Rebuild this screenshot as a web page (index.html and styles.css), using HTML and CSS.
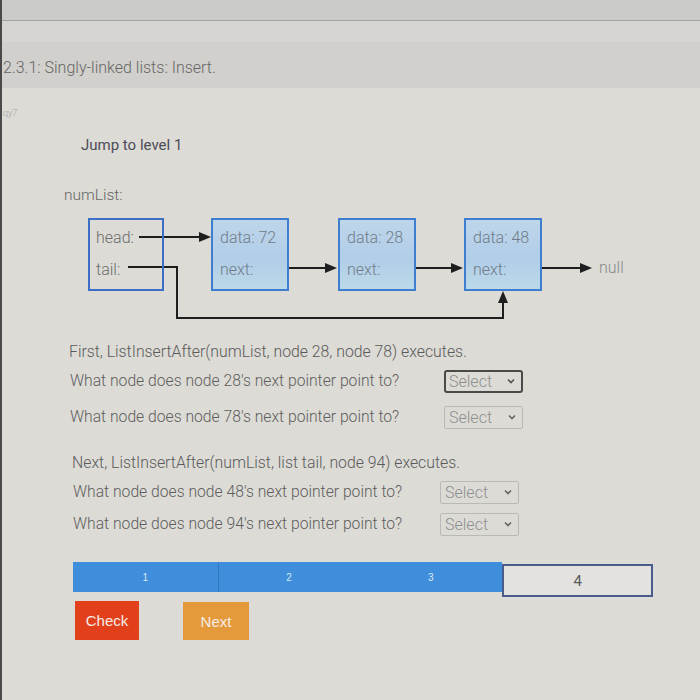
FILE: index.html
```html
<!DOCTYPE html>
<html>
<head>
<meta charset="utf-8">
<link rel="stylesheet" href="styles.css">
</head>
<body>
<div class="page">
  <div class="topbar"></div>
  <div class="band"></div>
  <div class="titlebar"><span class="title">2.3.1: Singly-linked lists: Insert.</span></div>
  <div class="content">
    <div class="code">qy7</div>
    <div class="jump">Jump to level 1</div>
    <div class="numlist">numList:</div>
    <div class="diagram">
      <svg class="arrows" width="700" height="115" viewBox="0 0 700 115">
        <g stroke="#1e1e1e" stroke-width="2" fill="none">
          <line x1="139" y1="25" x2="203" y2="25"/>
          <polyline points="128,55 177,55 177,106 503,106 503,88"/>
          <line x1="260" y1="56" x2="329" y2="56"/>
          <line x1="386" y1="56" x2="455" y2="56"/>
          <line x1="513" y1="56" x2="584" y2="56"/>
        </g>
        <g fill="#1e1e1e">
          <polygon points="199,20 211,25 199,30"/>
          <polygon points="325,51 337,56 325,61"/>
          <polygon points="451,51 463,56 451,61"/>
          <polygon points="580,51 592,56 580,61"/>
          <polygon points="498,91 503,79 508,91"/>
        </g>
      </svg>
      <div class="box listbox"><span>head:</span><span>tail:</span></div>
      <div class="box node n1"><span>data: 72</span><span>next:</span></div>
      <div class="box node n2"><span>data: 28</span><span>next:</span></div>
      <div class="box node n3"><span>data: 48</span><span>next:</span></div>
      <div class="null">null</div>
    </div>

    <div class="group g1">
      <div class="intro">First, ListInsertAfter(numList, node 28, node 78) executes.</div>
      <div class="row">
        <div class="label">What node does node 28's next pointer point to?</div>
        <div class="select focused"><span>Select</span><svg width="10" height="8" viewBox="0 0 10 8"><path d="M2 2.5 L5 5.5 L8 2.5" stroke="#555" stroke-width="1.6" fill="none"/></svg></div>
      </div>
      <div class="row">
        <div class="label">What node does node 78's next pointer point to?</div>
        <div class="select"><span>Select</span><svg width="10" height="8" viewBox="0 0 10 8"><path d="M2 2.5 L5 5.5 L8 2.5" stroke="#666" stroke-width="1.6" fill="none"/></svg></div>
      </div>
    </div>

    <div class="group g2">
      <div class="intro">Next, ListInsertAfter(numList, list tail, node 94) executes.</div>
      <div class="row">
        <div class="label">What node does node 48's next pointer point to?</div>
        <div class="select"><span>Select</span><svg width="10" height="8" viewBox="0 0 10 8"><path d="M2 2.5 L5 5.5 L8 2.5" stroke="#666" stroke-width="1.6" fill="none"/></svg></div>
      </div>
      <div class="row">
        <div class="label">What node does node 94's next pointer point to?</div>
        <div class="select"><span>Select</span><svg width="10" height="8" viewBox="0 0 10 8"><path d="M2 2.5 L5 5.5 L8 2.5" stroke="#666" stroke-width="1.6" fill="none"/></svg></div>
      </div>
    </div>

    <div class="progress">
      <div class="seg done s1">1</div>
      <div class="seg done s2">2</div>
      <div class="seg done s3">3</div>
      <div class="seg current">4</div>
    </div>

    <div class="buttons">
      <div class="btn check">Check</div>
      <div class="btn next">Next</div>
    </div>
  </div>
</div>
</body>
</html>
```

FILE: styles.css
```css
html, body {
  margin: 0;
  padding: 0;
}
body {
  width: 700px;
  height: 700px;
  overflow: hidden;
  background: #dcdbd6;
  font-family: Roboto, "Liberation Sans", sans-serif;
  font-weight: 300;
  color: #5c5c5c;
}
.page {
  border-left: 2px solid #4a4a4a;
  height: 700px;
  box-sizing: border-box;
  overflow: hidden;
}
.topbar {
  height: 20px;
  background: #cbcbc7;
  border-bottom: 1px solid #a3a3a0;
}
.band {
  height: 21px;
  background: #d6d5d1;
}
.titlebar {
  height: 46px;
  background: #d1d0cc;
  box-sizing: border-box;
  padding-top: 16px;
}
.title {
  display: block;
  margin-left: 1px;
  font-size: 16px;
  line-height: 20px;
  font-weight: 300;
  color: #666;
}
.content {
  height: 612px;
}
.code {
  margin-top: 18px;
  margin-left: 1px;
  font-size: 9px;
  line-height: 14px;
  color: #a5a5a5;
}
.jump {
  margin-top: 15px;
  margin-left: 79px;
  font-size: 15px;
  line-height: 20px;
  font-weight: 400;
  color: #4d4d58;
}
.numlist {
  margin-top: 30px;
  margin-left: 62px;
  font-size: 15.5px;
  line-height: 20px;
  color: #666;
}
.diagram {
  position: relative;
  margin-top: 7px;
  margin-left: -2px;
  width: 700px;
  height: 115px;
}
.arrows {
  position: absolute;
  left: 0;
  top: 0;
}
.box {
  position: absolute;
  top: 6px;
  height: 73px;
  box-sizing: border-box;
  border: 2px solid #3b6fc6;
  padding: 8px 0 0 6px;
  display: flex;
  flex-direction: column;
  gap: 12px;
  font-size: 16px;
  line-height: 20px;
}
.listbox {
  left: 88px;
  width: 76px;
  color: #6c6c6c;
}
.node {
  width: 78px;
  padding-left: 7px;
  background: linear-gradient(180deg, #bed6ea 0%, #b1cde8 55%, #bcd9e8 100%);
  color: #6f7c88;
  border-color: #3e7ed0;
}
.n1 { left: 211px; }
.n2 { left: 338px; }
.n3 { left: 464px; }
.null {
  position: absolute;
  left: 599px;
  top: 46px;
  font-size: 16px;
  line-height: 20px;
  color: #8a8a8a;
}
.group {
  display: flex;
  flex-direction: column;
}
.g1 {
  margin-top: 15px;
  padding-left: 67px;
  gap: 4px;
}
.g1 .intro {
  margin-bottom: -1px;
}
.g1 .label {
  width: 374px;
}
.g2 {
  margin-top: 20px;
  padding-left: 70px;
}
.g2 .intro {
  margin-bottom: 3px;
}
.g2 .label {
  width: 367px;
}
.intro {
  font-size: 15.8px;
  line-height: 20px;
  color: #5a5a5a;
}
.row {
  height: 32px;
  display: flex;
  align-items: center;
}
.label {
  font-size: 15.7px;
  line-height: 20px;
  color: #5e5e5e;
  margin-left: 1px;
}
.select {
  width: 79px;
  height: 23px;
  box-sizing: border-box;
  border: 1px solid #b9b9b6;
  border-radius: 2px;
  display: flex;
  align-items: center;
  justify-content: space-between;
  padding: 0 5px 0 4px;
  font-size: 16px;
  color: #8f8f8f;
}
.select.focused {
  border: 2px solid #4a4a4a;
  border-radius: 3px;
  padding-left: 3px;
}
.progress {
  margin-top: 22px;
  margin-left: 71px;
  width: 580px;
  display: flex;
  align-items: flex-start;
}
.seg {
  height: 30px;
  display: flex;
  align-items: center;
  justify-content: center;
  font-family: "Liberation Sans", sans-serif;
  font-weight: 400;
  font-size: 10px;
}
.done {
  background: #3f8edb;
  color: #dbe8f6;
}
.s1 { width: 145px; border-right: 1px solid #3378c0; }
.s2 { width: 141px; }
.s3 { width: 143px; }
.current {
  margin-top: 2px;
  width: 151px;
  height: 33px;
  box-sizing: border-box;
  border: 2px solid #4a5b8c;
  background: #e3e2de;
  color: #5a5a5a;
  font-size: 15px;
  font-family: Roboto, sans-serif;
}
.buttons {
  margin-top: 4px;
  margin-left: 73px;
  display: flex;
  gap: 44px;
  align-items: flex-start;
}
.btn {
  height: 39px;
  display: flex;
  align-items: center;
  justify-content: center;
  font-family: "Liberation Sans", sans-serif;
  font-weight: 400;
  font-size: 15px;
  color: #f6ece6;
}
.check {
  width: 64px;
  background: #e1401b;
}
.next {
  width: 66px;
  height: 38px;
  margin-top: 1px;
  background: #e49a3b;
}
```
